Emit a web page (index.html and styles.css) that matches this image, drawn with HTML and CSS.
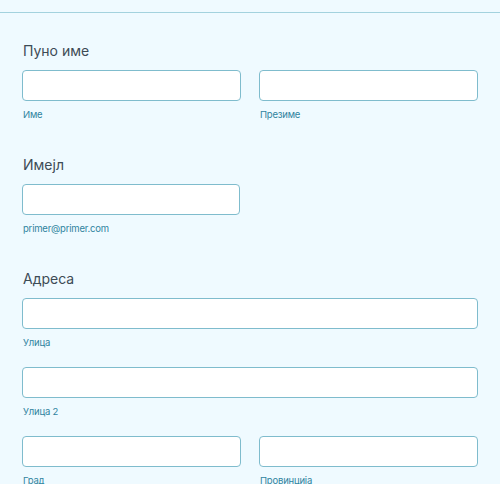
FILE: index.html
```html
<!DOCTYPE html>
<html lang="sr">
<head>
<meta charset="utf-8">
<link rel="stylesheet" href="styles.css">
</head>
<body>
<div class="topbar"></div>
<form class="form">
  <section class="field">
    <div class="label">Пуно име</div>
    <div class="row two">
      <div class="cell"><div class="input"></div><div class="sub">Име</div></div>
      <div class="cell"><div class="input"></div><div class="sub">Презиме</div></div>
    </div>
  </section>
  <section class="field">
    <div class="label">Имејл</div>
    <div class="row two">
      <div class="cell narrow"><div class="input"></div><div class="sub">primer@primer.com</div></div>
    </div>
  </section>
  <section class="field">
    <div class="label">Адреса</div>
    <div class="row">
      <div class="cell"><div class="input"></div><div class="sub">Улица</div></div>
    </div>
    <div class="row">
      <div class="cell"><div class="input"></div><div class="sub">Улица 2</div></div>
    </div>
    <div class="row two">
      <div class="cell"><div class="input"></div><div class="sub">Град</div></div>
      <div class="cell"><div class="input"></div><div class="sub">Провинција</div></div>
    </div>
  </section>
</form>
</body>
</html>
```

FILE: styles.css
```css
html, body {
  margin: 0;
  padding: 0;
  background: #effaff;
  font-family: Inter, "Noto Sans", sans-serif;
}
.topbar {
  height: 12px;
  border-bottom: 1px solid #a3d2de;
}
.form {
  padding: 29px 22px 0 22px;
}
.field {
  margin-bottom: 34px;
}
.label {
  font-size: 14px;
  line-height: 18px;
  color: #3d4b55;
  padding-left: 1px;
  margin-bottom: 10px;
}
.row {
  display: grid;
  grid-template-columns: 1fr;
  margin-bottom: 17px;
}
.row:last-child { margin-bottom: 0; }
.row.two {
  grid-template-columns: 219px 219px;
  column-gap: 18px;
}
.cell.narrow .input { width: 218px; }
.input {
  box-sizing: border-box;
  height: 31px;
  background: #fff;
  border: 1px solid #7fbccd;
  border-radius: 4px;
}
.sub {
  font-size: 9.5px;
  line-height: 14px;
  letter-spacing: -0.2px;
  color: #2f84a0;
  margin-top: 7px;
  padding-left: 1px;
}
```
